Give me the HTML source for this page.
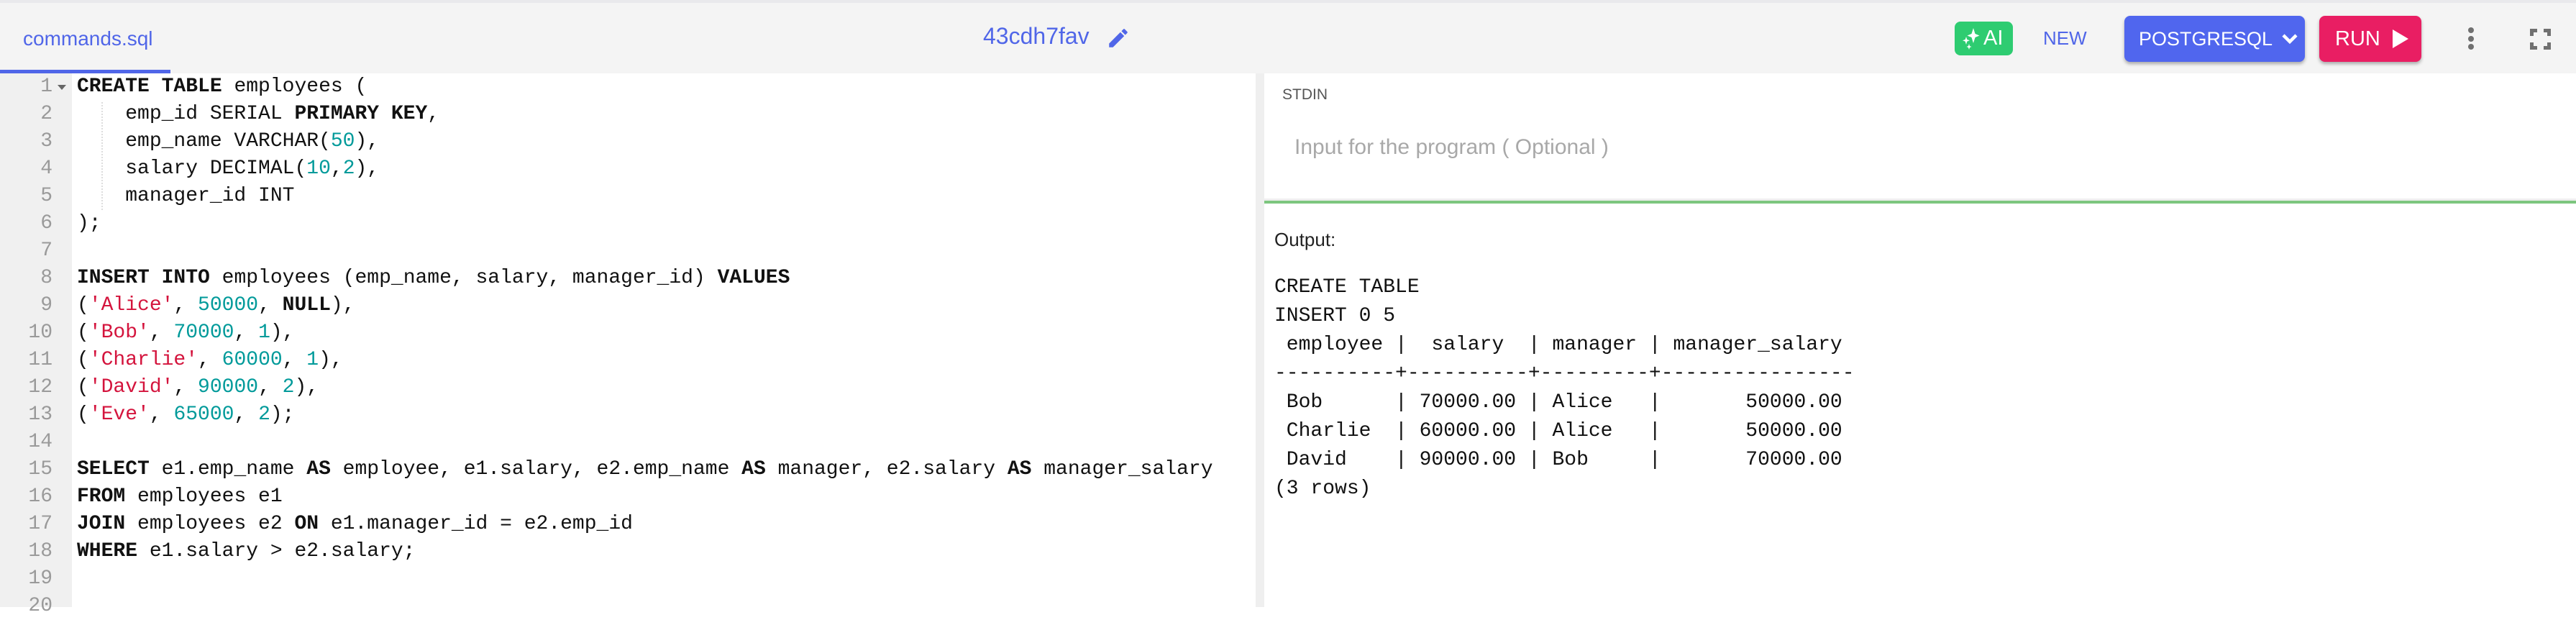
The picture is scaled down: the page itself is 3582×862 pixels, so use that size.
<!DOCTYPE html>
<html><head><meta charset="utf-8"><style>
*{margin:0;padding:0;box-sizing:border-box}
body{width:3582px;height:844px;overflow:hidden;background:#fff;position:relative;font-family:"Liberation Sans",sans-serif}
.abs{position:absolute}
.top{left:0;top:0;width:3582px;height:102px;background:#f4f4f4;border-top:4px solid #e9e9ec}
.code{font-family:"Liberation Mono",monospace;font-size:28px;white-space:pre;color:#111;line-height:38px}
.ln{position:absolute;left:0;width:73px;text-align:right;font-family:"Liberation Mono",monospace;font-size:28px;color:#9a9a9a}
.cl{position:absolute;left:107px}
b{font-weight:bold}
.s{color:#d4143d}.n{color:#009a9a}
.btn{position:absolute;border-radius:8px;color:#fff;font-size:27px;display:flex;align-items:center;white-space:nowrap}
</style></head><body>
<div class="abs top"></div>
<div class="abs" style="left:32px;top:38px;font-size:28px;color:#5066e8">commands.sql</div>
<div class="abs" style="left:0;top:97px;width:237px;height:5px;background:#5066e8"></div>
<div class="abs" style="left:1367px;top:32px;font-size:32px;color:#5066e8">43cdh7fav</div>
<svg class="abs" style="left:1538px;top:36px" width="34" height="34" viewBox="0 0 24 24"><path fill="#5066e8" d="M3 17.25V21h3.75L17.81 9.94l-3.75-3.75L3 17.25zM20.71 7.04a1 1 0 000-1.41l-2.34-2.34a1 1 0 00-1.41 0l-1.83 1.83 3.75 3.75 1.83-1.83z"/></svg>
<div class="btn" style="left:2718px;top:30px;width:81px;height:47px;background:#2ecc71;padding-left:10px;font-size:29px">
<svg width="26" height="30" viewBox="0 0 26 30"><path fill="#fff" d="M16 0l2.5 8 6 2.5-6 2.5-2.5 8-2.5-8-6-2.5 6-2.5zM6 12l1.3 4 3.7 1.3-3.7 1.3L6 23l-1.3-4.4L1 17.3l3.7-1.3zM10 22l1 3 2.5 1-2.5 1-1 3-1-3-2.5-1 2.5-1z"/></svg><span style="margin-left:4px">AI</span></div>
<div class="abs" style="left:2841px;top:38px;font-size:26px;color:#5066e8">NEW</div>
<div class="btn" style="left:2954px;top:22px;width:251px;height:64px;background:#5066ee;box-shadow:0 3px 5px rgba(0,0,0,.3);padding-left:20px">POSTGRESQL
<svg style="margin-left:12px;flex:none" width="24" height="18" viewBox="0 0 24 18"><path d="M3 4l9 9 9-9" stroke="#fff" stroke-width="4.5" fill="none"/></svg></div>
<div class="btn" style="left:3225px;top:22px;width:142px;height:64px;background:#e91e63;box-shadow:0 3px 5px rgba(0,0,0,.3);padding-left:22px;font-size:29px">RUN
<svg style="margin-left:16px" width="24" height="28" viewBox="0 0 24 28"><path d="M1 1l22 13L1 27z" fill="#fff"/></svg></div>
<svg class="abs" style="left:3428px;top:36px" width="16" height="36"><circle cx="8" cy="6" r="4" fill="#707070"/><circle cx="8" cy="18" r="4" fill="#707070"/><circle cx="8" cy="29" r="4" fill="#707070"/></svg>
<svg class="abs" style="left:3518px;top:40px" width="29" height="29" viewBox="0 0 29 29"><path d="M2.5 10V2.5H10M19 2.5h7.5V10M26.5 19v7.5H19M10 26.5H2.5V19" stroke="#707070" stroke-width="5" fill="none"/></svg>

<div class="abs" style="left:0;top:102px;width:100px;height:742px;background:#f0f0f0"></div>
<div class="abs" style="left:141px;top:142px;height:150px;border-left:2px dotted #ddd"></div>
<div class="abs" style="left:80px;top:118px;width:0;height:0;border-left:6px solid transparent;border-right:6px solid transparent;border-top:7px solid #666"></div>
<div class="code">
<div class="ln" style="top:102px">1</div><div class="ln" style="top:140px">2</div><div class="ln" style="top:178px">3</div><div class="ln" style="top:216px">4</div><div class="ln" style="top:254px">5</div><div class="ln" style="top:292px">6</div><div class="ln" style="top:330px">7</div><div class="ln" style="top:368px">8</div><div class="ln" style="top:406px">9</div><div class="ln" style="top:444px">10</div><div class="ln" style="top:482px">11</div><div class="ln" style="top:520px">12</div><div class="ln" style="top:558px">13</div><div class="ln" style="top:596px">14</div><div class="ln" style="top:634px">15</div><div class="ln" style="top:672px">16</div><div class="ln" style="top:710px">17</div><div class="ln" style="top:748px">18</div><div class="ln" style="top:786px">19</div><div class="ln" style="top:824px">20</div>
<div class="cl" style="top:102px"><b>CREATE TABLE</b> employees (</div>
<div class="cl" style="top:140px">    emp_id SERIAL <b>PRIMARY KEY</b>,</div>
<div class="cl" style="top:178px">    emp_name VARCHAR(<span class="n">50</span>),</div>
<div class="cl" style="top:216px">    salary DECIMAL(<span class="n">10</span>,<span class="n">2</span>),</div>
<div class="cl" style="top:254px">    manager_id INT</div>
<div class="cl" style="top:292px">);</div>
<div class="cl" style="top:368px"><b>INSERT INTO</b> employees (emp_name, salary, manager_id) <b>VALUES</b></div>
<div class="cl" style="top:406px">(<span class="s">'Alice'</span>, <span class="n">50000</span>, <b>NULL</b>),</div>
<div class="cl" style="top:444px">(<span class="s">'Bob'</span>, <span class="n">70000</span>, <span class="n">1</span>),</div>
<div class="cl" style="top:482px">(<span class="s">'Charlie'</span>, <span class="n">60000</span>, <span class="n">1</span>),</div>
<div class="cl" style="top:520px">(<span class="s">'David'</span>, <span class="n">90000</span>, <span class="n">2</span>),</div>
<div class="cl" style="top:558px">(<span class="s">'Eve'</span>, <span class="n">65000</span>, <span class="n">2</span>);</div>
<div class="cl" style="top:634px"><b>SELECT</b> e1.emp_name <b>AS</b> employee, e1.salary, e2.emp_name <b>AS</b> manager, e2.salary <b>AS</b> manager_salary</div>
<div class="cl" style="top:672px"><b>FROM</b> employees e1</div>
<div class="cl" style="top:710px"><b>JOIN</b> employees e2 <b>ON</b> e1.manager_id = e2.emp_id</div>
<div class="cl" style="top:748px"><b>WHERE</b> e1.salary &gt; e2.salary;</div>
</div>

<div class="abs" style="left:1746px;top:102px;width:12px;height:742px;background:#efefef"></div>
<div class="abs" style="left:1783px;top:120px;font-size:21px;color:#555">STDIN</div>
<div class="abs" style="left:1800px;top:188px;font-size:30px;color:#a8a8a8">Input for the program ( Optional )</div>
<div class="abs" style="left:1758px;top:276px;width:1824px;height:3px;background:#eee"></div>
<div class="abs" style="left:1758px;top:279px;width:1824px;height:4px;background:#7dc67f"></div>
<div class="abs" style="left:1772px;top:318px;font-size:26px;color:#222">Output:</div>
<div class="abs code" style="left:1772px;top:380px;line-height:40px;color:#111">CREATE TABLE
INSERT 0 5
 employee |  salary  | manager | manager_salary
----------+----------+---------+----------------
 Bob      | 70000.00 | Alice   |       50000.00
 Charlie  | 60000.00 | Alice   |       50000.00
 David    | 90000.00 | Bob     |       70000.00
(3 rows)</div>
</body></html>
